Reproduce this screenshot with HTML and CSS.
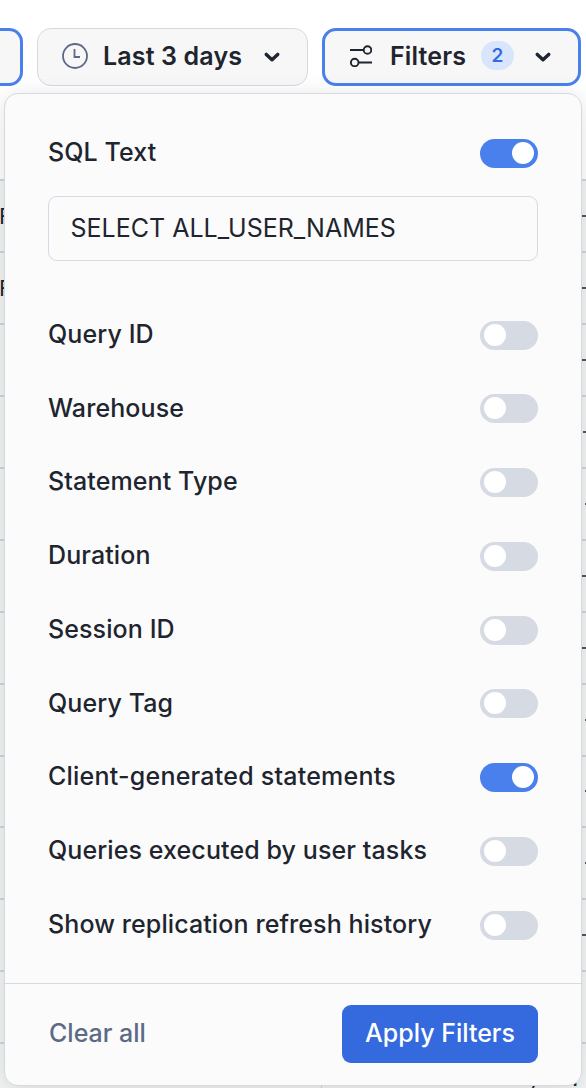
FILE: index.html
```html
<!DOCTYPE html>
<html lang="en">
<head>
  <meta charset="utf-8">
  <title>Query History</title>
  <link rel="stylesheet" href="styles.css">
</head>
<body>
  <div class="toolbar">
    <button class="btn btn-active btn-prev"></button>
    <button class="btn btn-date">
      <svg class="icon-clock" width="26" height="26" viewBox="0 0 26 26" fill="none" stroke="#5d6a85" stroke-width="1.8">
        <circle cx="13" cy="13" r="12"/>
        <path d="M12.5 6v8H18"/>
      </svg>
      <span class="date-label">Last 3 days</span>
      <svg class="chevron" width="16" height="12" viewBox="0 0 16 12" fill="none" stroke="#1e252f" stroke-width="3.4" stroke-linecap="round" stroke-linejoin="round">
        <path d="M2.3 3.4L8 8.8l5.7-5.4"/>
      </svg>
    </button>
    <button class="btn btn-active btn-filters">
      <svg class="icon-filters" width="22" height="22" viewBox="0 0 22 22" fill="none" stroke="#1e252f" stroke-width="1.9">
        <path d="M0 5h13.5M8.5 17.5H22"/>
        <circle cx="17.5" cy="5" r="3.8"/>
        <circle cx="4.7" cy="17.5" r="3.8"/>
      </svg>
      <span class="filters-label">Filters</span>
      <span class="count">2</span>
      <svg class="chevron" width="16" height="12" viewBox="0 0 16 12" fill="none" stroke="#1e252f" stroke-width="3.4" stroke-linecap="round" stroke-linejoin="round">
        <path d="M2.3 3.4L8 8.8l5.7-5.4"/>
      </svg>
    </button>
  </div>

  <div class="table">
    <div class="row"><span>F</span><i></i></div>
    <div class="row"><span>F</span><i></i></div>
    <div class="row"><i></i></div>
    <div class="row"><i class="short"></i></div>
    <div class="row"><i class="dot"></i></div>
    <div class="row"><i></i></div>
    <div class="row"><i></i></div>
    <div class="row"><i class="dot"></i></div>
    <div class="row"><i class="dot"></i></div>
    <div class="row"><i class="dot"></i></div>
    <div class="row"><i></i></div>
    <div class="row"></div>
    <div class="row row-last"><div class="cell">select c.users, s.</div></div>
  </div>

  <div class="panel">
    <div class="filters">
      <div class="filter"><span>SQL Text</span><span class="toggle on"></span></div>
      <div class="sql-input">SELECT ALL_USER_NAMES</div>
      <div class="filter"><span>Query ID</span><span class="toggle"></span></div>
      <div class="filter"><span>Warehouse</span><span class="toggle"></span></div>
      <div class="filter"><span>Statement Type</span><span class="toggle"></span></div>
      <div class="filter"><span>Duration</span><span class="toggle"></span></div>
      <div class="filter"><span>Session ID</span><span class="toggle"></span></div>
      <div class="filter"><span>Query Tag</span><span class="toggle"></span></div>
      <div class="filter wide"><span>Client-generated statements</span><span class="toggle on"></span></div>
      <div class="filter"><span>Queries executed by user tasks</span><span class="toggle"></span></div>
      <div class="filter"><span>Show replication refresh history</span><span class="toggle"></span></div>
    </div>
    <div class="footer">
      <button class="clear">Clear all</button>
      <button class="apply">Apply Filters</button>
    </div>
  </div>
</body>
</html>
```
FILE: styles.css
```css
* {
  box-sizing: border-box;
}

body {
  margin: 0;
  width: 586px;
  height: 1088px;
  overflow: hidden;
  position: relative;
  background: #fff;
  color: #1e252f;
  font-family: Inter, "Liberation Sans", sans-serif;
  font-size: 25px;
}

button {
  font: inherit;
  color: inherit;
  border: 0;
  padding: 0;
  background: none;
}

.toolbar {
  display: flex;
  gap: 14px;
  height: 179px;
  padding-top: 28px;
}

.btn {
  display: flex;
  align-items: center;
  flex: none;
  height: 58px;
  border: 1px solid #d5d9e4;
  border-radius: 14px;
  background: #f7f7f7;
  font-weight: 600;
}

.btn-active {
  border: 3px solid #4a80ec;
}

.btn-prev {
  width: 23px;
  border-left: 0;
  border-radius: 0 14px 14px 0;
}

.btn-date {
  width: 271px;
  padding-left: 23.5px;
}

.icon-clock {
  margin-top: -3px;
}

.date-label {
  width: 139px;
  margin: 0 21.5px 0 15.5px;
  padding-bottom: 2px;
  letter-spacing: 0.15px;
  text-align: left;
  white-space: nowrap;
}

.btn-filters {
  width: 259px;
  padding-left: 25px;
}

.icon-filters {
  margin-top: -3px;
}

.filters-label {
  width: 76px;
  margin: 0 15px 0 18px;
  padding-bottom: 2px;
  letter-spacing: 0.15px;
  text-align: left;
}

.count {
  width: 33px;
  height: 29px;
  margin: 0 20.5px 3px 0;
  border-radius: 15px;
  background: #d9e5fd;
  color: #346add;
  font-size: 19px;
  line-height: 29px;
  text-align: center;
}

.row {
  display: flex;
  align-items: center;
  justify-content: space-between;
  height: 71.95px;
  border-top: 2px solid #d0d4de;
  background: #f3f4f4;
  font-size: 22px;
}

.row span {
  width: 5px;
  margin-left: -1px;
}

.row i {
  width: 5px;
  height: 2px;
  margin-left: auto;
  background: #55585f;
}

.row .short {
  width: 3px;
}

.row .dot {
  width: 1px;
}

.row-last {
  justify-content: flex-start;
}

.cell {
  height: 100%;
  margin-left: 321px;
  padding-left: 22px;
  border-left: 1px solid #d0d4de;
  font-family: "Liberation Mono", monospace;
  font-size: 22px;
  line-height: 74px;
  white-space: nowrap;
}

.panel {
  position: absolute;
  top: 93px;
  left: 4px;
  width: 578px;
  height: 993px;
  border: 1px solid #d5d9e4;
  border-radius: 14px;
  background: #fbfbfb;
  box-shadow: 0 4px 24px rgba(0, 0, 0, 0.12);
}

.filters {
  height: 889px;
  padding: 22px 43px 0;
}

.filter {
  display: flex;
  align-items: center;
  justify-content: space-between;
  height: 73.75px;
  font-weight: 500;
  letter-spacing: 0.1px;
}

.filter.wide {
  letter-spacing: 0.22px;
}

.filter span:first-child {
  padding-bottom: 1.5px;
}

.toggle {
  display: flex;
  width: 58px;
  height: 29px;
  margin-top: 1px;
  padding: 3px 4px;
  border-radius: 15px;
  background: #d6dae3;
}

.toggle::before {
  content: "";
  width: 22px;
  height: 22px;
  border-radius: 50%;
  background: #fff;
}

.toggle.on {
  justify-content: flex-end;
  background: #4a80ec;
}

.sql-input {
  height: 65px;
  margin: 6px 0 37px;
  padding-left: 21.5px;
  border: 1px solid #d5d9e4;
  border-radius: 9px;
  line-height: 63px;
}

.footer {
  display: flex;
  align-items: center;
  justify-content: space-between;
  height: 102px;
  padding: 0 43px 2px 44px;
  border-top: 1px solid #d5d9e4;
}

.clear {
  padding-bottom: 2px;
  color: #5d6a85;
  font-weight: 500;
}

.apply {
  width: 196px;
  height: 58px;
  padding-bottom: 2px;
  border-radius: 9px;
  background: #346add;
  color: #fff;
  font-weight: 500;
}
```
